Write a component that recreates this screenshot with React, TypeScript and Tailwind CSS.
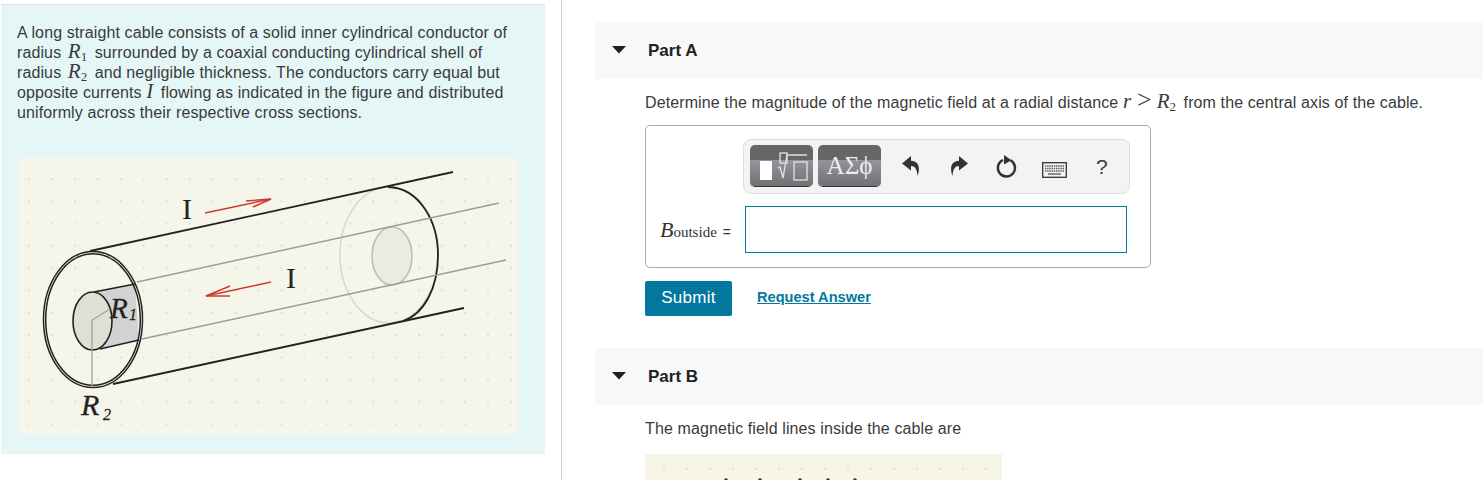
function Rsub({ n }: { n: number }) {
  return (
    <span className="ml-[2px] mr-[3px] font-['Liberation_Serif',serif] leading-[0] whitespace-nowrap tracking-normal">
      <i className="text-[21px] leading-[0]">R</i>
      <span className="relative top-[3px] text-[13px] leading-[0]">{n}</span>
    </span>
  );
}

function CableFigure() {
  return (
    <svg viewBox="18 158 500 276" className="block w-[500px] h-[276px]">
      <defs>
        <pattern id="dots" x="28" y="178" width="22.95" height="22.3" patternUnits="userSpaceOnUse">
          <circle cx="1" cy="1" r="1" fill="#d8d8cf" />
        </pattern>
      </defs>
      <rect x="18" y="158" width="500" height="276" fill="#f6f5e9" />
      <rect x="18" y="158" width="500" height="276" fill="url(#dots)" />

      {/* far end of the cable */}
      <ellipse cx="389" cy="255" rx="49" ry="68" fill="none" stroke="#d8d8d4" strokeWidth="1.6" />
      <ellipse cx="392" cy="256" rx="20" ry="29" fill="#ecebe2" stroke="#bdbdb8" strokeWidth="1.6" />
      <path d="M388 187 C420 188 438 222 438 255 C438 288 424 314 403 321" fill="none" stroke="#222" strokeWidth="1.8" />

      {/* long lines */}
      <path d="M90 251 L453 172" stroke="#222" strokeWidth="1.8" />
      <path d="M113 384 L464 308" stroke="#222" strokeWidth="1.8" />
      <path d="M137 282 L499 203" stroke="#9c9c99" strokeWidth="1.5" />
      <path d="M142 339 L506 260" stroke="#9c9c99" strokeWidth="1.5" />

      {/* near end */}
      <path d="M94 292 L135 284 L139 340 L100 349 Z" fill="#d2d2d2" />
      <path d="M94 292 L135 284" stroke="#222" strokeWidth="1.6" />
      <path d="M100 349 L139 340" stroke="#222" strokeWidth="1.6" />
      <ellipse cx="92.5" cy="321" rx="19.5" ry="29" fill="#dfdfd3" stroke="#222" strokeWidth="1.6" />
      <ellipse cx="93" cy="319.5" rx="49.5" ry="68" fill="none" stroke="#222" strokeWidth="1.5" />
      <ellipse cx="93" cy="319.5" rx="47.3" ry="65.8" fill="none" stroke="#222" strokeWidth="1.5" />
      <path d="M110 309 L92 320 L92 387" fill="none" stroke="#a3a3a0" strokeWidth="1.3" />

      {/* current arrows */}
      <g fill="none" stroke="#cc3a30" strokeWidth="1.5">
        <path d="M205 213 L271 199" />
        <path d="M246 201 L271 199 L253 207" />
        <path d="M271 282 L206 296" />
        <path d="M230 286 L206 296 L230 296" />
      </g>

      <g fill="#222" fontFamily="'Liberation Serif', serif">
        <text x="182" y="219" fontSize="30">I</text>
        <text x="286" y="288" fontSize="30">I</text>
      </g>
      <g fill="#222" stroke="#222" strokeWidth="0.3" fontFamily="'Liberation Serif', serif" fontStyle="italic">
        <text x="110" y="318" fontSize="29">R</text>
        <text x="129" y="320" fontSize="16">1</text>
        <text x="81" y="415" fontSize="30">R</text>
        <text x="103" y="420" fontSize="16">2</text>
      </g>
    </svg>
  );
}

function PartBFigure() {
  const dots = Array.from({ length: 15 }, (_, i) => 19 + i * 23);
  return (
    <svg width="357" height="26" viewBox="0 0 357 26" className="block">
      <rect width="357" height="26" fill="#f6f3e7" />
      {dots.map((x) => (
        <circle key={x} cx={x} cy="15" r="1" fill="#d8d8cf" />
      ))}
      {[81, 115, 155, 183, 210].map((x) => (
        <circle key={x} cx={x} cy="26" r="1.8" fill="#333" />
      ))}
    </svg>
  );
}

function IntroPanel() {
  return (
    <div className="w-[544px] h-[450px] bg-[#e5f6f7] border-t border-[#e2e2e2] pt-[18px] pl-[16px]">
      <p className="w-[510px] text-[16px] leading-[20px] tracking-[0.11px] text-[#3a3a3a]">
        A long straight cable consists of a solid inner cylindrical conductor of
        <br />
        radius <Rsub n={1} /> surrounded by a coaxial conducting cylindrical shell of
        <br />
        radius <Rsub n={2} /> and negligible thickness. The conductors carry equal but
        <br />
        opposite currents <i className="mr-[3px] font-['Liberation_Serif',serif] text-[21px] leading-[0]">I</i> flowing as indicated in the figure and distributed
        <br />
        uniformly across their respective cross sections.
      </p>
      <div className="mt-[35px] ml-[1px]">
        <CableFigure />
      </div>
    </div>
  );
}

function PartHeader({ label }: { label: string }) {
  return (
    <div className="h-[57px] bg-[#f8f8f8] flex items-center pl-[17px]">
      <svg width="14" height="8" viewBox="0 0 14 8" className="mb-[1px]">
        <path d="M0 0 H14 L7 7.5 Z" fill="#1f1f1f" />
      </svg>
      <span className="ml-[22px] text-[17px] font-bold text-[#222]">{label}</span>
    </div>
  );
}

function MathButton({ children }: { children: React.ReactNode }) {
  return (
    <div className="relative w-[63px] h-[42px] rounded-[5px] border-b border-[#333] overflow-hidden">
      <div className="h-[15px] bg-[#666666]" />
      <div className="h-[27px] bg-gradient-to-b from-[#94949b] to-[#6f6f74]" />
      <div className="absolute inset-0 flex items-center justify-center">{children}</div>
    </div>
  );
}

function Toolbar() {
  return (
    <div className="w-[387px] h-[55px] ml-[97px] bg-[#f3f3f3] border border-[#dedede] rounded-[8px] flex items-start pt-[5px] pl-[6px]">
      <MathButton>
        <svg width="63" height="42" viewBox="0 0 63 42">
          <rect x="10" y="16" width="12" height="19" fill="#fff" />
          <g fill="none" stroke="#dedede" strokeWidth="1.4">
            <rect x="30" y="8" width="7" height="10" />
            <path d="M28 23 L30 22 L33 33 L37 10 H57" />
            <rect x="44" y="17" width="13" height="18" />
          </g>
        </svg>
      </MathButton>
      <div className="ml-[5px]">
        <MathButton>
          <span className="font-['Liberation_Serif',serif] text-[25px] leading-none text-[#ededed]">ΑΣϕ</span>
        </MathButton>
      </div>
      <svg width="18" height="20" viewBox="0 0 18 20" className="ml-[21px] mt-[11px]">
        <path d="M9 0 L0 7.5 L9 14.5 V10 C13 10 15 13 15.5 20 C18.5 12 17 5 9 4.8 Z" fill="#333" />
      </svg>
      <svg width="18" height="20" viewBox="0 0 18 20" className="ml-[30px] mt-[11px]">
        <path d="M9 0 L18 7.5 L9 14.5 V10 C5 10 3 13 2.5 20 C-0.5 12 1 5 9 4.8 Z" fill="#333" />
      </svg>
      <svg width="24" height="24" viewBox="0 0 24 24" className="ml-[27px] mt-[9px]">
        <path d="M15.5 6.3 A8.6 8.6 0 1 1 8 6" fill="none" stroke="#333" strokeWidth="2.4" />
        <path d="M9 1 L16.5 6.2 L9 10.5 Z" fill="#333" />
      </svg>
      <svg width="25" height="16" viewBox="0 0 25 16" className="ml-[23px] mt-[17px]">
        <rect x="0.7" y="0.7" width="23.6" height="14.6" fill="#f3f3f3" stroke="#333" strokeWidth="1.3" />
        <path d="M3 4 H22 M3 6.5 H22 M3 9 H22" stroke="#555" strokeWidth="1.3" strokeDasharray="1.4 0.8" />
        <path d="M6 12 H19" stroke="#555" strokeWidth="1.3" />
      </svg>
      <span className="ml-[29px] mt-[11px] text-[21px] leading-none text-[#3a3a3a]">?</span>
    </div>
  );
}

function AnswerBox() {
  return (
    <div className="mt-[12px] w-[506px] h-[143px] border border-[#aaaaaa] rounded-[5px] pt-[13px]">
      <Toolbar />
      <div className="mt-[12px] flex items-center">
        <span className="w-[99px] pl-[14px] font-['Liberation_Serif',serif] text-[#333] whitespace-nowrap">
          <i className="text-[22px]">B</i>
          <span className="text-[15px]">outside</span>
          <span className="ml-[6px] text-[14px] font-['Liberation_Sans',sans-serif]">=</span>
        </span>
        <div className="w-[382px] h-[47px] border border-[#007c9f] bg-white" />
      </div>
    </div>
  );
}

export default function App() {
  return (
    <div className="flex h-[480px] overflow-hidden bg-white font-['Liberation_Sans',Arial,sans-serif]">
      <div className="w-[562px] shrink-0 pt-[4px] pl-[1px] border-r border-[#cfcfcf]">
        <IntroPanel />
      </div>
      <div className="flex-1 pl-[33px] pt-[22px]">
        <PartHeader label="Part A" />
        <div className="pl-[50px]">
          <p className="mt-[14px] h-[20px] text-[16px] leading-[20px] tracking-[0.11px] text-[#3a3a3a] whitespace-nowrap">
            Determine the magnitude of the magnetic field at a radial distance{" "}
            <span className="font-['Liberation_Serif',serif] text-[21px] leading-[0] tracking-normal">
              <i className="leading-[0]">r</i>
              <span className="ml-[6px] mr-[3px] text-[26px] leading-[0]">&gt;</span>
            </span>
            <Rsub n={2} /> from the central axis of the cable.
          </p>
          <AnswerBox />
          <div className="mt-[13px] flex items-center">
            <button className="w-[87px] h-[35px] pb-[1px] rounded-[2px] bg-[#03789e] text-white text-[17px] tracking-[0.3px]">
              Submit
            </button>
            <a className="ml-[25px] mb-[2px] text-[14.6px] font-bold text-[#03789e] underline">
              Request Answer
            </a>
          </div>
        </div>
        <div className="mt-[32px]">
          <PartHeader label="Part B" />
        </div>
        <div className="pl-[50px]">
          <p className="mt-[14px] text-[16px] leading-[20px] tracking-[0.11px] text-[#3a3a3a]">
            The magnetic field lines inside the cable are
          </p>
          <div className="mt-[15px]">
            <PartBFigure />
          </div>
        </div>
      </div>
    </div>
  );
}
